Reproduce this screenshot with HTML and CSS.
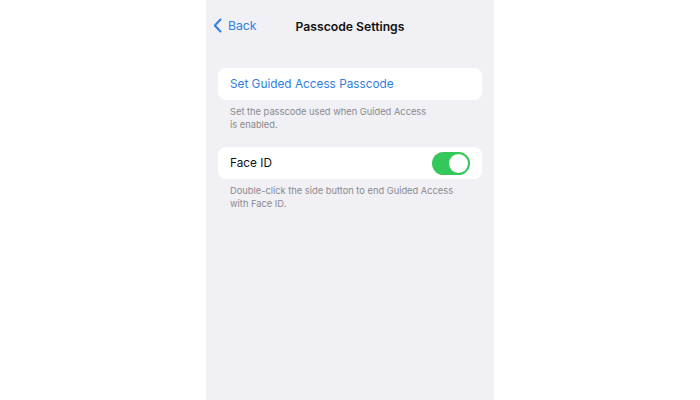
FILE: index.html
```html
<!DOCTYPE html>
<html lang="en">

<head>
    <meta charset="UTF-8">
    <meta name="viewport" content="width=device-width, initial-scale=1.0">
    <title>Passcode Settings</title>
    <link rel="stylesheet" href="styles.css">
</head>

<body>
    <div class="screen">
        <div class="nav-bar">
            <a class="nav-back" href="#">
                <svg width="9" height="15" viewBox="0 0 9 15">
                    <path d="M7.5 1.5 L1.8 7.5 L7.5 13.5" fill="none" stroke="#2f7fe0" stroke-width="2"
                        stroke-linecap="round" stroke-linejoin="round" />
                </svg>
                <span>Back</span>
            </a>
            <h1 class="nav-title">Passcode Settings</h1>
        </div>

        <div class="group">
            <div class="cell">
                <span class="cell-link">Set Guided Access Passcode</span>
            </div>
            <p class="group-footer">Set the passcode used when Guided Access<br>is enabled.</p>
        </div>

        <div class="group">
            <div class="cell">
                <span class="cell-label">Face ID</span>
                <label class="switch">
                    <input type="checkbox" checked>
                    <span class="switch-track"></span>
                </label>
            </div>
            <p class="group-footer">Double-click the side button to end Guided Access<br>with Face ID.</p>
        </div>
    </div>
</body>

</html>
```

FILE: styles.css
```css
body {
    margin: 0;
    padding: 0;
    background: #fff;
    font-family: Inter, "Liberation Sans", sans-serif;
}

.screen {
    width: 288px;
    height: 400px;
    margin: 0 auto;
    background: #f0f0f5;
    box-sizing: border-box;
    padding: 0 12px;
}

.nav-bar {
    position: relative;
    height: 50px;
    display: flex;
    align-items: center;
    justify-content: center;
}

.nav-back {
    position: absolute;
    left: -5px;
    top: 18px;
    display: flex;
    align-items: center;
    gap: 6px;
    color: #2f7fe0;
    text-decoration: none;
    font-size: 12.2px;
}

.nav-title {
    margin: 2px 0 0;
    font-size: 12.2px;
    font-weight: 600;
    color: #111;
}

.group {
    margin-top: 18px;
}

.group + .group {
    margin-top: 16px;
}

.cell {
    height: 32px;
    background: #fff;
    border-radius: 8px;
    display: flex;
    align-items: center;
    justify-content: space-between;
    padding: 0 12px;
}

.cell-link {
    color: #2f7fe0;
    font-size: 11.8px;
}

.cell-label {
    color: #111;
    font-size: 11.8px;
}

.group-footer {
    margin: 5px 12px 0;
    font-size: 9.3px;
    line-height: 13px;
    color: #8a8a8f;
}

.switch input {
    display: none;
}

.switch-track {
    display: block;
    position: relative;
    width: 38px;
    height: 23px;
    border-radius: 12px;
    background: #34c759;
}

.switch-track::after {
    content: "";
    position: absolute;
    right: 2px;
    top: 2px;
    width: 19px;
    height: 19px;
    border-radius: 50%;
    background: #fff;
}
```
